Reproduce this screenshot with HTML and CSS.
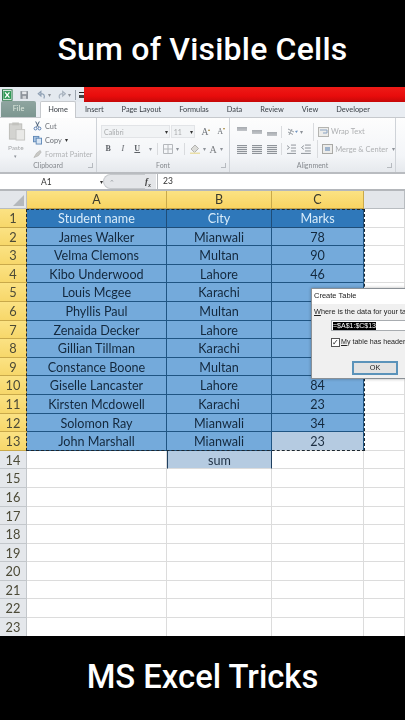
FILE: index.html
```html
<!DOCTYPE html>
<html lang="en">
<head>
<meta charset="utf-8">
<title>Sum of Visible Cells</title>
<link rel="stylesheet" href="styles.css">
</head>
<body>
<div class="page">
  <header class="band band-top"><h1>Sum of Visible Cells</h1></header>
  <main class="app">
    <div class="qat">
      <div class="qat-tools">
        <svg class="xl" viewBox="0 0 12 13"><rect x=".5" y=".5" width="11" height="12" fill="#fff" stroke="#1d6b3a"/><rect x="1.500" y="2" width="9" height="9" fill="#2f9a55"/><path d="M3.500 3.500l5 6M8.500 3.500l-5 6" stroke="#fff" stroke-width="1.500"/></svg>
        <svg class="qi save" viewBox="0 0 10 10"><rect x=".5" y=".5" width="9" height="9" fill="#8d939b"/><rect x="2.500" y="1" width="5" height="3" fill="#e6e8eb"/><rect x="3" y="6" width="4" height="3.500" fill="#d0d3d7"/></svg>
        <svg class="qi undo" viewBox="0 0 10 10"><path d="M8 9c1.500-3 0-6-4-5.500M1.500 3.500L4.500 1v5z" fill="none" stroke="#8fa0b4" stroke-width="1.400"/></svg>
        <span class="caret">▾</span>
        <svg class="qi redo" viewBox="0 0 10 10"><path d="M2 9C.5 6 2 3 6 3.500M8.500 3.500L5.500 1v5z" fill="none" stroke="#a9b3bf" stroke-width="1.400"/></svg>
        <span class="caret">▾</span>
        <span class="qat-sep"></span>
        <span class="qat-more"></span>
      </div>
      <div class="title-red"></div>
    </div>
    <nav class="tabs">
      <span class="tab-file">File</span>
      <span class="tab-home">Home</span>
      <span class="tab tab-insert">Insert</span>
      <span class="tab tab-layout">Page Layout</span>
      <span class="tab tab-formulas">Formulas</span>
      <span class="tab tab-data">Data</span>
      <span class="tab tab-review">Review</span>
      <span class="tab tab-view">View</span>
      <span class="tab tab-dev">Developer</span>
    </nav>
    <section class="ribbon">
      <div class="group g-clip">
        <div class="g-body clip-body">
          <div class="paste">
            <svg class="paste-icon" viewBox="0 0 18 20"><rect x="1" y="2" width="13" height="16" fill="#d3d3d0" stroke="#bcbcb8"/><rect x="4" y="0.500" width="7" height="3" fill="#c2c2be"/><rect x="8" y="8" width="9" height="11" fill="#e9e9e7" stroke="#c5c5c2"/></svg>
            <span>Paste</span>
            <span class="caret">▾</span>
          </div>
          <div class="clip-cmds">
            <div class="cmd strong"><svg class="ci" viewBox="0 0 10 10"><path d="M3 0l3 6M7 0L4 6" stroke="#39506b" fill="none"/><circle cx="2.800" cy="7.800" r="1.600" fill="none" stroke="#4a72a8"/><circle cx="7.200" cy="7.800" r="1.600" fill="none" stroke="#4a72a8"/></svg>Cut</div>
            <div class="cmd strong"><svg class="ci" viewBox="0 0 10 10"><rect x=".5" y="1" width="6" height="6" fill="#a9c4e2" stroke="#5d86b5"/><rect x="3.500" y="3" width="6" height="6.500" fill="#d9e6f4" stroke="#5d86b5"/></svg>Copy <span class="caret dark">▾</span></div>
            <div class="cmd"><svg class="ci" viewBox="0 0 10 10"><path d="M1 9l3-5 4-3 1 2-3 4z" fill="#c9c9c6" stroke="#a9a9a5" stroke-width=".6"/></svg>Format Painter</div>
          </div>
        </div>
        <div class="g-label">Clipboard<i class="launch"></i></div>
      </div>
      <div class="group g-font">
        <div class="g-body font-body">
          <div class="font-row">
            <span class="box box-name">Calibri<b class="caret dark">▾</b></span>
            <span class="box box-size">11<b class="caret dark">▾</b></span>
            <span class="grow">A<sup>▴</sup></span>
            <span class="grow small">A<sup>▾</sup></span>
          </div>
          <div class="font-row row-2">
            <b class="fmt">B</b><i class="fmt it">I</i><u class="fmt und">U</u><span class="caret">▾</span>
            <span class="v-sep"></span>
            <svg class="bi border-ico" viewBox="0 0 10 10"><path d="M.5.5h9v9h-9zM5 .5v9M.5 5h9" fill="none" stroke="#b5b8bc"/></svg><span class="caret">▾</span>
            <span class="v-sep"></span>
            <svg class="bi fill-ico" viewBox="0 0 10 10"><path d="M1 5l4-4 3.500 3.500-4 4z" fill="#dcdcd8" stroke="#9b9b98" stroke-width=".7"/><rect x="0" y="8.500" width="10" height="1.500" fill="#eadfa8"/></svg><span class="caret">▾</span>
            <span class="font-color">A</span><span class="caret">▾</span>
          </div>
        </div>
        <div class="g-label">Font<i class="launch"></i></div>
      </div>
      <div class="group g-align">
        <div class="g-body align-body">
          <div class="al-row">
            <span class="al al-top"></span><span class="al al-mid"></span><span class="al al-bot"></span>
            <span class="v-sep al-sep"></span>
            <svg class="ang" viewBox="0 0 12 10"><path d="M1 2l6 3M1 5l5 2.500M2 8l3-6" stroke="#9aa0a6" fill="none"/><path d="M8 4l3-.5-1.500 2.500z" fill="#6f93bf"/></svg>
            <span class="caret">▾</span>
            <span class="v-sep wrap-sep"></span>
            <svg class="wm" viewBox="0 0 11 10"><rect x=".5" y=".5" width="10" height="9" fill="#ececea" stroke="#b4b4b1"/><path d="M2 3h7v3H5" fill="none" stroke="#8aa3c2"/></svg>
            <span class="wm-text">Wrap Text</span>
          </div>
          <div class="al-row row-2">
            <span class="al al-lines"></span><span class="al al-lines center"></span><span class="al al-lines right"></span>
            <span class="v-sep al-sep"></span>
            <svg class="ind" viewBox="0 0 10 10"><path d="M4 1h6M4 4h6M4 7h6M0 9.500h10M0 1.500l2.500 2L0 5.500" stroke="#8f949a" fill="none"/></svg>
            <svg class="ind" viewBox="0 0 10 10"><path d="M4 1h6M4 4h6M4 7h6M0 9.500h10M3 1.500l-2.500 2L3 5.500" stroke="#8f949a" fill="none"/></svg>
            <span class="v-sep wrap-sep two"></span>
            <svg class="wm" viewBox="0 0 11 10"><rect x=".5" y=".5" width="10" height="9" fill="#ececea" stroke="#a9a9a6"/><rect x="3" y="3" width="5" height="4" fill="#9fb4cd"/></svg>
            <span class="wm-text">Merge &amp; Center</span><span class="caret">▾</span>
          </div>
        </div>
        <div class="g-label">Alignment<i class="launch"></i></div>
      </div>
      <div class="group g-next"></div>
    </section>
    <div class="formula">
      <div class="namebox">A1<span class="caret dark">▾</span></div>
      <div class="pill"><span>⌃</span></div>
      <div class="fx">f<sub>x</sub></div>
      <div class="fvalue">23</div>
    </div>
    <section class="sheet">
      <div class="corner"><span></span></div><div class="col">A</div><div class="col">B</div><div class="col">C</div><div class="col plain"></div>

      <div class="rh">1</div><div class="c head">Student name</div><div class="c head">City</div><div class="c head">Marks</div><div class="c"></div>
      <div class="rh">2</div><div class="c d">James Walker</div><div class="c d">Mianwali</div><div class="c d">78</div><div class="c"></div>
      <div class="rh">3</div><div class="c d">Velma Clemons</div><div class="c d">Multan</div><div class="c d">90</div><div class="c"></div>
      <div class="rh">4</div><div class="c d">Kibo Underwood</div><div class="c d">Lahore</div><div class="c d">46</div><div class="c"></div>
      <div class="rh">5</div><div class="c d">Louis Mcgee</div><div class="c d">Karachi</div><div class="c d"></div><div class="c"></div>
      <div class="rh">6</div><div class="c d">Phyllis Paul</div><div class="c d">Multan</div><div class="c d"></div><div class="c"></div>
      <div class="rh">7</div><div class="c d">Zenaida Decker</div><div class="c d">Lahore</div><div class="c d"></div><div class="c"></div>
      <div class="rh">8</div><div class="c d">Gillian Tillman</div><div class="c d">Karachi</div><div class="c d"></div><div class="c"></div>
      <div class="rh">9</div><div class="c d">Constance Boone</div><div class="c d">Multan</div><div class="c d"></div><div class="c"></div>
      <div class="rh">10</div><div class="c d">Giselle Lancaster</div><div class="c d">Lahore</div><div class="c d">84</div><div class="c"></div>
      <div class="rh">11</div><div class="c d">Kirsten Mcdowell</div><div class="c d">Karachi</div><div class="c d">23</div><div class="c"></div>
      <div class="rh">12</div><div class="c d">Solomon Ray</div><div class="c d">Mianwali</div><div class="c d">34</div><div class="c"></div>
      <div class="rh">13</div><div class="c d">John Marshall</div><div class="c d">Mianwali</div><div class="c active">23</div><div class="c"></div>
      <div class="rh">14</div><div class="c"></div><div class="c sum">sum</div><div class="c"></div><div class="c"></div>
      <div class="rh">15</div><div class="c"></div><div class="c"></div><div class="c"></div><div class="c"></div>
      <div class="rh">16</div><div class="c"></div><div class="c"></div><div class="c"></div><div class="c"></div>
      <div class="rh">17</div><div class="c"></div><div class="c"></div><div class="c"></div><div class="c"></div>
      <div class="rh">18</div><div class="c"></div><div class="c"></div><div class="c"></div><div class="c"></div>
      <div class="rh">19</div><div class="c"></div><div class="c"></div><div class="c"></div><div class="c"></div>
      <div class="rh">20</div><div class="c"></div><div class="c"></div><div class="c"></div><div class="c"></div>
      <div class="rh">21</div><div class="c"></div><div class="c"></div><div class="c"></div><div class="c"></div>
      <div class="rh">22</div><div class="c"></div><div class="c"></div><div class="c"></div><div class="c"></div>
      <div class="rh">23</div><div class="c"></div><div class="c"></div><div class="c"></div><div class="c"></div>
      <div class="ants"></div>
    </section>
    <aside class="dialog">
      <div class="dlg-title">Create Table</div>
      <div class="dlg-q"><u>W</u>here is the data for your table?</div>
      <div class="dlg-input"><span>=$A$1:$C$13</span></div>
      <div class="dlg-check"><span class="check">✓</span><span><u>M</u>y table has headers</span></div>
      <div class="dlg-btn">OK</div>
    </aside>
  </main>
  <footer class="band band-bottom"><h2>MS Excel Tricks</h2></footer>
</div>
</body>
</html>
```
FILE: styles.css
```css
* { box-sizing: border-box; }
html, body { margin: 0; padding: 0; background: #000; }
body { font-family: "Lato", "Open Sans", "Liberation Sans", sans-serif; overflow: hidden; }
.page { width: 405px; height: 720px; display: flex; flex-direction: column; }

.band { background: #000; color: #fff; display: flex; justify-content: center; font-family: "Roboto", "Liberation Sans", sans-serif; }
.band h1, .band h2 { margin: 0; font-weight: 500; white-space: nowrap; }
.band-top { height: 87px; padding-top: 30px; }
.band-top h1 { font-size: 32px; line-height: 38px; letter-spacing: .2px; }
.band-bottom { height: 84px; padding-top: 22px; }
.band-bottom h2 { font-size: 32.800px; line-height: 38px; }

.app { position: relative; height: 549px; background: #fff; overflow: hidden; display: flex; flex-direction: column; filter: blur(.3px); }

/* quick access */
.qat { height: 15px; display: flex; background: #dfe5ec; flex: none; }
.qat-tools { width: 84px; display: flex; align-items: center; padding-left: 2px; background: #e4e9ef; }
.xl { width: 11px; height: 12px; margin-right: 7px; }
.qi { width: 9px; height: 10px; }
.save { margin-right: 9px; }
.caret { font-size: 6px; color: #8d9298; line-height: 1; font-style: normal; font-weight: 400; }
.caret.dark { color: #333; }
.qat .caret { margin: 0 7px 0 2px; }
.qat-sep { width: 1px; height: 10px; background: #9aa3ad; margin-right: 3px; margin-left: -3px; }
.qat-more { width: 5px; height: 6px; border-top: 1px solid #222; border-bottom: 3px solid #444; }
.title-red { flex: 1; background: linear-gradient(#ee1b17, #e80c0c 60%, #c60808); }

/* tabs */
.tabs { height: 16px; flex: none; display: flex; align-items: flex-end; background: #e9edf2; font-size: 7.400px; color: #3b4047; border-bottom: 1px solid #c6c9cd; padding-left: 1px; }
.tabs span { line-height: 15px; white-space: nowrap; }
.tab-file { width: 35px; height: 16px; background: linear-gradient(#8fa5a0, #7c9690); color: #dfeadf; text-align: center; border-radius: 2px 2px 0 0; }
.tab-home { width: 36px; height: 17px; margin-left: 4px; margin-bottom: -1px; background: #fff; border: 1px solid #c6c9cd; border-bottom: 0; text-align: center; border-radius: 2px 2px 0 0; }
.tab-insert { margin-left: 9px; }
.tab-layout { margin-left: 18px; }
.tab-formulas { margin-left: 18px; }
.tab-data { margin-left: 18px; }
.tab-review { margin-left: 18px; }
.tab-view { margin-left: 18px; }
.tab-dev { margin-left: 18px; }

/* ribbon */
.ribbon { height: 56px; flex: none; display: flex; background: linear-gradient(#fdfdfd, #f3f5f8 70%, #e6e9ed); border-bottom: 2px solid #b9bcc0; color: #a4a6a8; font-size: 7px; }
.group { display: flex; flex-direction: column; border-right: 1px solid #cfd3d8; flex: none; }
.g-body { flex: 1; min-height: 0; }
.g-label { height: 12px; line-height: 10px; text-align: center; position: relative; color: #85898e; font-size: 7px; }
.launch { position: absolute; right: 3px; top: 3px; width: 5px; height: 5px; border: 1px solid #b6babf; border-left: 0; border-top: 0; }
.g-clip { width: 97px; }
.g-font { width: 133px; }
.g-align { width: 166px; }
.g-next { flex: 1; border-right: 0; }

.clip-body { display: flex; }
.paste { width: 31px; padding: 4px 0 0 8px; display: flex; flex-direction: column; font-size: 6.500px; color: #a7a9ab; }
.paste-icon { width: 18px; height: 20px; margin-bottom: 3px; }
.paste .caret { margin-left: 6px; font-size: 5px; }
.paste span { line-height: 8px; }
.clip-cmds { padding-top: 1px; margin-left: 2px; }
.cmd { height: 14px; display: flex; align-items: center; gap: 3px; white-space: nowrap; color: #b0b2b4; font-size: 7.300px; }
.cmd.strong { color: #6c7076; }
.ci { width: 9px; height: 10px; flex: none; }

.font-body { padding: 7px 0 0 4px; }
.font-row { display: flex; align-items: center; height: 13px; }
.font-row.row-2 { margin-top: 5px; height: 12px; }
.box { height: 13px; background: #f1f3f5; border: 1px solid #e2e4e7; color: #a9abad; display: flex; justify-content: space-between; align-items: center; padding: 0 1px 0 2px; font-size: 7px; }
.box-name { width: 70px; }
.box-size { width: 25px; margin-left: 1px; }
.box b { font-size: 6px; }
.grow { font-size: 9.500px; color: #6d7278; margin-left: 6px; font-family: "Liberation Serif", serif; width: 12px; }
.grow.small { font-size: 8px; margin-left: 4px; }
.grow sup { font-size: 4px; color: #a88a3c; vertical-align: 4px; line-height: 0; }
.fmt { font-family: "Liberation Serif", serif; font-size: 8px; color: #5d6166; width: 14.500px; font-style: normal; font-weight: 700; text-align: center; line-height: 12px; }
.it { font-style: italic; font-weight: 400; }
.und { text-decoration: underline; margin-right: 4px; }
.v-sep { width: 1px; height: 12px; background: #d9dbde; margin: 0 5px; }
.bi { width: 10px; height: 10px; margin-right: 3px; }
.font-color { font-size: 10px; color: #7a7d80; margin: 0 3px 0 4px; font-family: "Liberation Serif", serif; }

.align-body { padding: 7px 0 0 7px; }
.al-row { display: flex; align-items: center; height: 13px; }
.al-row.row-2 { margin-top: 5px; height: 12px; }
.al { width: 10px; height: 9px; margin-right: 5px; background-repeat: no-repeat; }
.al-top { background: linear-gradient(#a7abb0, #c2c5c9) top / 10px 4px no-repeat; }
.al-mid { background: linear-gradient(#a7abb0, #c2c5c9) center / 10px 4px no-repeat; }
.al-bot { background: linear-gradient(#a7abb0, #c2c5c9) bottom / 10px 4px no-repeat; }
.al-lines { background: repeating-linear-gradient(#8f949a 0 1px, #e4e6e8 1px 2px); }
.al-sep { margin: 0 5px 0 -1px; }
.ang { width: 12px; height: 10px; }
.al-row .caret { margin-left: 1px; }
.wrap-sep { margin: 0 4px 0 10px; height: 18px; }
.wrap-sep.two { margin-left: 1px; }
.wm { width: 11px; height: 10px; margin-right: 2px; flex: none; }
.wm-text { color: #aeb0b2; font-size: 7.500px; white-space: nowrap; margin-right: 3px; }
.ind { width: 10px; height: 10px; margin-right: 5px; }

/* formula bar */
.formula { height: 17px; flex: none; display: flex; background: #fff; border-bottom: 2px solid #b4b7bb; font-size: 8px; color: #333; align-items: stretch; }
.namebox { width: 103px; display: flex; align-items: center; padding-left: 41px; gap: 48px; font-size: 8.500px; }
.pill { width: 42px; background: #e4e6e9; border-radius: 8px 0 0 8px; border: 1px solid #c6c9cc; border-right: 0; color: #9b9fa4; font-size: 7px; padding-left: 5px; line-height: 14px; }
.fx { width: 11px; background: #e4e6e9; font-family: "Liberation Serif", serif; font-style: italic; font-weight: 700; font-size: 9px; color: #444; line-height: 14px; }
.fx sub { font-size: 6px; }
.fvalue { flex: 1; border-left: 1px solid #b4b7bb; padding-left: 5px; line-height: 15px; font-size: 8.500px; margin-left: 1px; }

/* sheet */
.sheet { position: relative; flex: 1; min-height: 0; display: grid; grid-template-columns: 27px 140px 105px 92px 41px; grid-template-rows: 18px repeat(23, 18.6px); background: #fff; font-size: 12.600px; color: #20303f; }
.corner { background: #e3e6ea; border-right: 1px solid #b8bcc0; border-bottom: 1px solid #b8bcc0; position: relative; overflow: hidden; }
.corner span { position: absolute; right: 2px; bottom: 2px; border-left: 11px solid transparent; border-bottom: 11px solid #b4b8bc; }
.col { background: linear-gradient(#fbe283, #f8d462); border-right: 1px solid #c9a94a; border-bottom: 1px solid #c2a24a; text-align: center; line-height: 18px; color: #3b3a2c; font-size: 12.500px; }
.col.plain { background: #e3e6ea; border-color: #b8bcc0; }
.rh { background: linear-gradient(#fbe283, #f7d76a); border-right: 1px solid #c9a94a; border-bottom: 1px solid #c9a94a; text-align: center; line-height: 18px; font-size: 12.800px; color: #4c4a37; }
.rh:nth-child(n+71) { background: #e4e7eb; border-color: #c3c7cb; }
.c { border-right: 1px solid #dcdcdc; border-bottom: 1px solid #dcdcdc; text-align: center; line-height: 19px; white-space: nowrap; }
.head { background: #2f78ba; color: #d8ecfa; border-color: #1e4d78; }
.d { background: #74aadb; border-color: #1f5583; color: #13283d; }
.active { background: #b5cbe1; border-right-color: #1f5583; color: #1d2f42; }
.sum { background: #b5cbe1; border-left: 1px solid #1f3f5f; border-right: 1px solid #1f3f5f; color: #1d2f42; }
.ants { position: absolute; left: 26px; top: 18px; width: 339px; height: 242px; border: 1.500px dashed #1c2730; pointer-events: none; }

/* dialog */
.dialog { position: absolute; left: 311px; top: 201px; width: 94px; height: 91px; background: #f0f0f0; border: 1px solid #8a9096; border-right: 0; box-shadow: 0 0 3px rgba(0,0,0,.3); overflow: hidden; font-family: "Liberation Sans", sans-serif; font-size: 7.300px; color: #222; white-space: nowrap; }
.dlg-title { height: 15px; background: #fff; padding-left: 2px; line-height: 14px; font-size: 7.500px; }
.dlg-q { margin-top: 3px; padding-left: 2px; line-height: 10px; }
.dlg-input { margin: 3px 0 0 19px; width: 90px; height: 11px; background: #fff; border: 1px solid #a8acb0; padding: 1px 0 0 1px; font-size: 7px; line-height: 8px; }
.dlg-input span { background: #000; color: #fff; display: inline-block; }
.dlg-check { display: flex; align-items: center; gap: 1px; margin: 6px 0 0 19px; line-height: 10px; font-size: 7.100px; }
.check { width: 9px; height: 9px; background: #fff; border: 1px solid #555; font-size: 8px; line-height: 7px; text-align: center; }
.dlg-btn { margin: 14px 0 0 40px; width: 46px; height: 14px; background: #e3e3e3; border: 2px solid #5b93ba; text-align: center; line-height: 10px; }
```
